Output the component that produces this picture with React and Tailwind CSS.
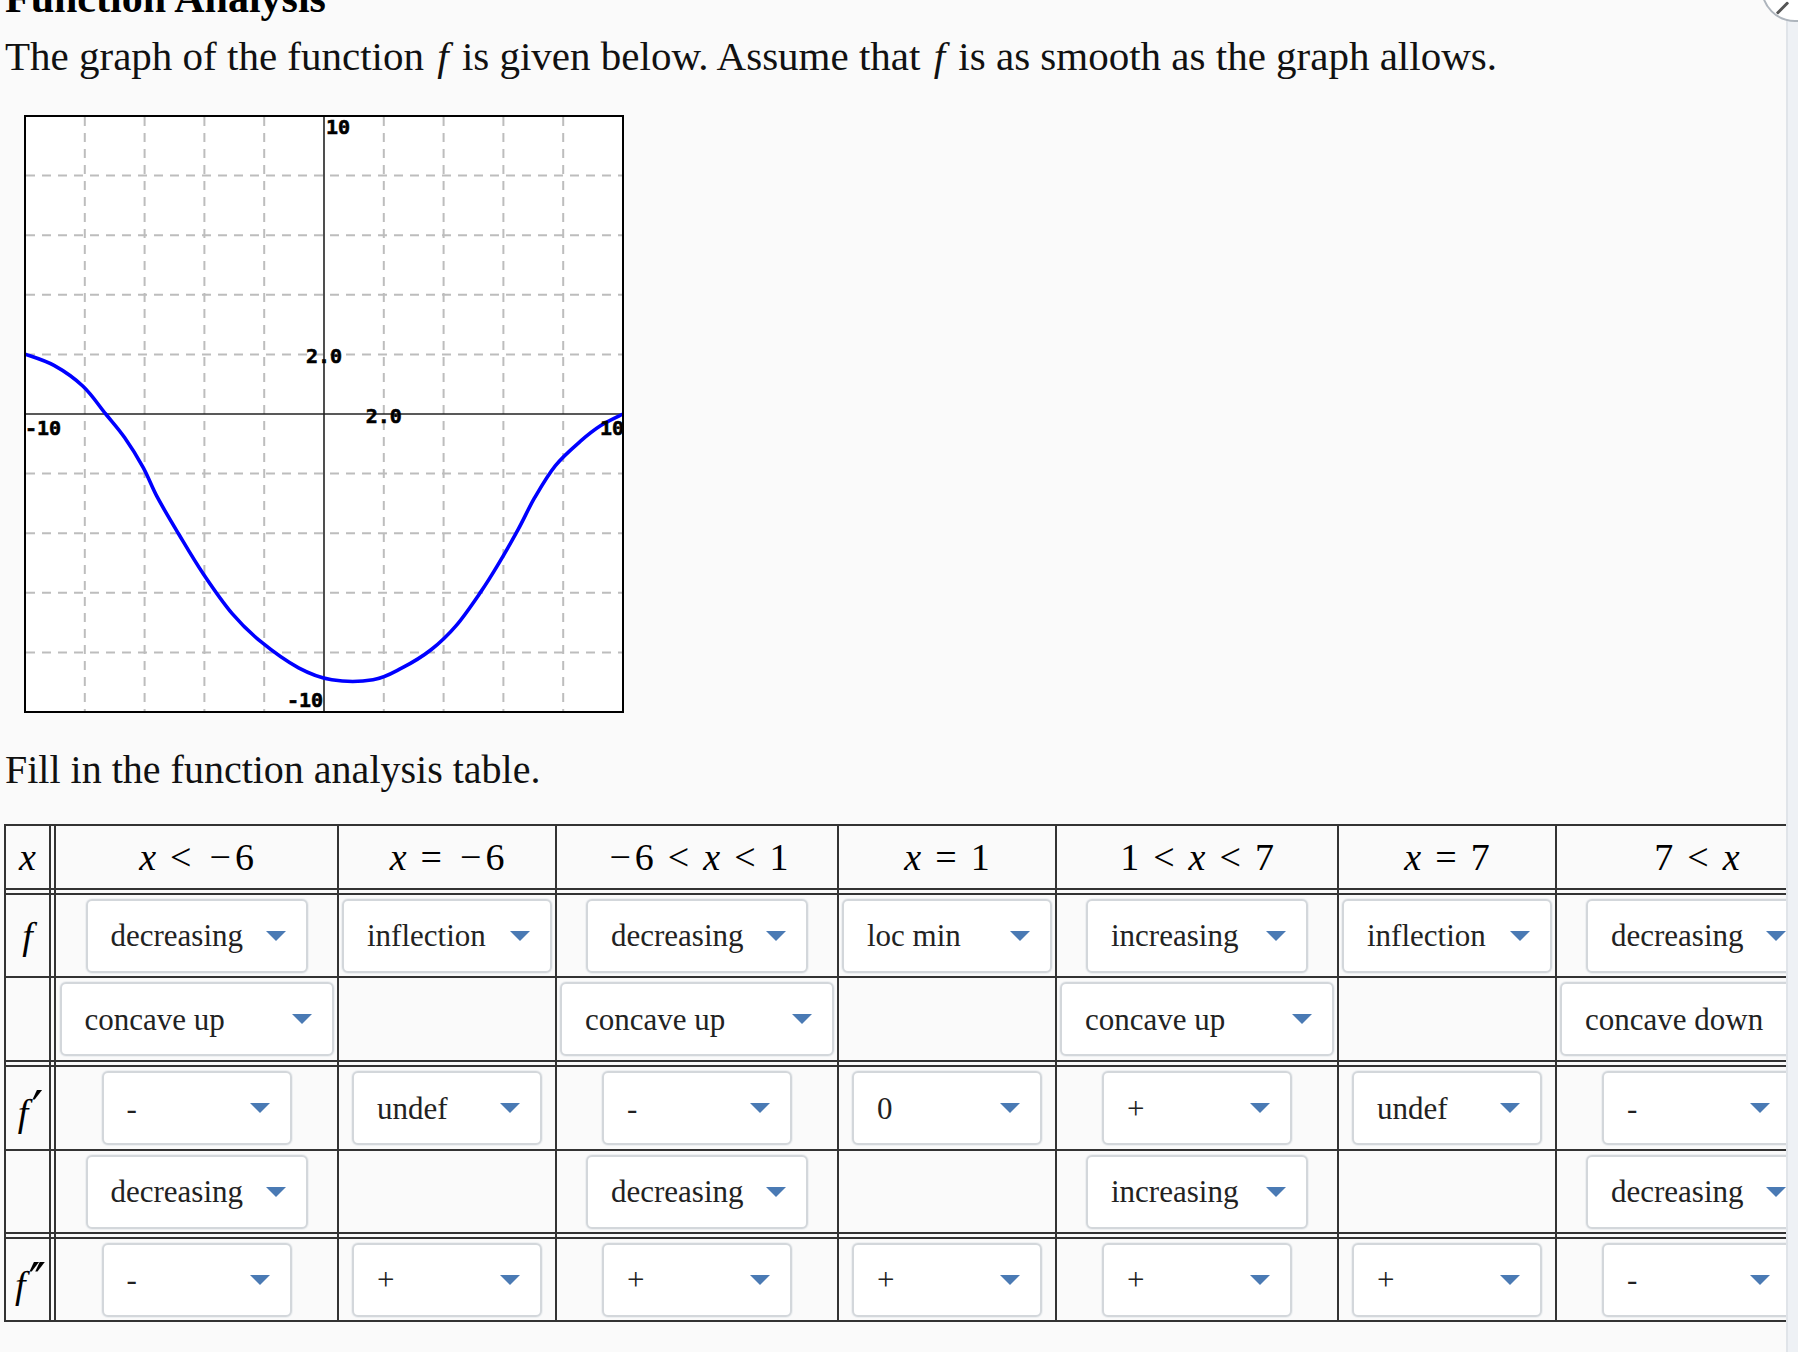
import React from "react";

const SERIF = "font-['Liberation_Serif',serif]";

function X(x) {
  return 1 + ((x + 10) / 20) * 598;
}
function Y(y) {
  return 1 + ((10 - y) / 20) * 596;
}

const curvePts = [
  [-10, 2.01], [-9.03, 1.63], [-8.06, 0.93], [-7.3, 0], [-6.67, -0.79], [-6.05, -1.79],
  [-5.57, -2.8], [-4.87, -4.01], [-4.04, -5.36], [-3.07, -6.7], [-2.1, -7.65], [-0.85, -8.52],
  [0.26, -8.92], [1.64, -8.92], [2.61, -8.52], [3.58, -7.91], [4.42, -7.1], [5.25, -5.96],
  [5.8, -5.09], [6.49, -3.88], [7.05, -2.8], [7.74, -1.73], [8.57, -0.92], [9.27, -0.38], [10, 0],
];

function curvePath() {
  const p = curvePts.map(([x, y]) => [X(x), Y(y)]);
  let d = `M${p[0][0].toFixed(2)},${p[0][1].toFixed(2)}`;
  for (let i = 0; i < p.length - 1; i++) {
    const p0 = p[i - 1] || p[i];
    const p1 = p[i];
    const p2 = p[i + 1];
    const p3 = p[i + 2] || p2;
    const c1 = [p1[0] + (p2[0] - p0[0]) / 6, p1[1] + (p2[1] - p0[1]) / 6];
    const c2 = [p2[0] - (p3[0] - p1[0]) / 6, p2[1] - (p3[1] - p1[1]) / 6];
    d += ` C${c1[0].toFixed(2)},${c1[1].toFixed(2)} ${c2[0].toFixed(2)},${c2[1].toFixed(2)} ${p2[0].toFixed(2)},${p2[1].toFixed(2)}`;
  }
  return d;
}

function Graph() {
  const ticks = [-8, -6, -4, -2, 2, 4, 6, 8];
  const lbl = {
    fontFamily: "'DejaVu Sans Mono', monospace",
    fontWeight: 700,
    fontSize: 20,
    fill: "#000",
    stroke: "#000",
    strokeWidth: 0.6,
  };
  return (
    <svg width="600" height="598" viewBox="0 0 600 598" className="block ml-[20px] mt-[38px]">
      <rect x="1" y="1" width="598" height="596" fill="#ffffff" />
      {ticks.map((k) => (
        <line key={"v" + k} x1={X(k)} y1="2" x2={X(k)} y2="596" stroke="#bdbdbd" strokeWidth="2" strokeDasharray="9 7" />
      ))}
      {ticks.map((k) => (
        <line key={"h" + k} x1="2" y1={Y(k)} x2="598" y2={Y(k)} stroke="#bdbdbd" strokeWidth="2" strokeDasharray="9 7" />
      ))}
      <line x1={X(0)} y1="1" x2={X(0)} y2="597" stroke="#222" strokeWidth="1.6" />
      <line x1="1" y1={Y(0)} x2="599" y2={Y(0)} stroke="#222" strokeWidth="1.6" />
      <path d={curvePath()} fill="none" stroke="#0000ff" strokeWidth="3.6" strokeLinejoin="round" />
      <text x="302" y="19" style={lbl}>10</text>
      <text x={X(0)} y="248" textAnchor="middle" style={lbl}>2.0</text>
      <text x={X(2)} y="308" textAnchor="middle" style={lbl}>2.0</text>
      <text x="1" y="320" style={lbl}>-10</text>
      <text x="600" y="320" textAnchor="end" style={lbl}>10</text>
      <text x="299" y="592" textAnchor="end" style={lbl}>-10</text>
      <rect x="1" y="1" width="598" height="596" fill="none" stroke="#000" strokeWidth="2" />
    </svg>
  );
}

function Arrow() {
  return (
    <svg width="20" height="10" viewBox="0 0 20 10" className="shrink-0">
      <path d="M0 0 H20 L10 10 Z" fill="#4a7ab4" />
    </svg>
  );
}

function Select({ text, w }) {
  return (
    <div
      className={`${SERIF} shrink-0 h-[74px] flex items-center justify-between bg-white border-2 border-[#d3d7db] rounded-[6px] shadow-[0_0_0_1px_#eef0f2] pl-[23px] pr-[20px] text-[31px] leading-none text-[#222] whitespace-nowrap`}
      style={{ width: w }}
    >
      <span>{text}</span>
      <Arrow />
    </div>
  );
}

function I({ children }) {
  return <i className="italic">{children}</i>;
}
function Rel({ c }) {
  return <span className="mx-[14px]">{c}</span>;
}
function Minus() {
  return <span className="px-[4px]">−</span>;
}
function Prime({ n }) {
  return (
    <span className="font-['DejaVu_Sans',sans-serif] not-italic text-[52px] leading-none relative top-[2px] ml-[3px] tracking-[-6px]">
      {n === 2 ? "′′" : "′"}
    </span>
  );
}

function Math({ children }) {
  return (
    <span className={`${SERIF} text-[38px] leading-none text-black whitespace-nowrap`}>{children}</span>
  );
}

const headers = [
  <Math><I>x</I></Math>,
  null,
  <Math><I>x</I><Rel c="<" /><Minus />6</Math>,
  <Math><I>x</I><Rel c="=" /><Minus />6</Math>,
  <Math><Minus />6<Rel c="<" /><I>x</I><Rel c="<" />1</Math>,
  <Math><I>x</I><Rel c="=" />1</Math>,
  <Math>1<Rel c="<" /><I>x</I><Rel c="<" />7</Math>,
  <Math><I>x</I><Rel c="=" />7</Math>,
  <Math>7<Rel c="<" /><I>x</I></Math>,
];

const S = (t, w) => <Select text={t} w={w} />;

const rows = [
  { kind: "row", cells: headers },
  { kind: "sp" },
  {
    kind: "row",
    cells: [
      <Math><I>f</I></Math>,
      null,
      S("decreasing", 222),
      S("inflection", 210),
      S("decreasing", 222),
      S("loc min", 210),
      S("increasing", 222),
      S("inflection", 210),
      S("decreasing", 222),
    ],
  },
  {
    kind: "row",
    cells: [
      null,
      null,
      S("concave up", 274),
      null,
      S("concave up", 274),
      null,
      S("concave up", 274),
      null,
      S("concave down", 274),
    ],
  },
  { kind: "sp" },
  {
    kind: "row",
    cells: [
      <Math><I>f</I><Prime n={1} /></Math>,
      null,
      S("-", 190),
      S("undef", 190),
      S("-", 190),
      S("0", 190),
      S("+", 190),
      S("undef", 190),
      S("-", 190),
    ],
  },
  {
    kind: "row",
    cells: [
      null,
      null,
      S("decreasing", 222),
      null,
      S("decreasing", 222),
      null,
      S("increasing", 222),
      null,
      S("decreasing", 222),
    ],
  },
  { kind: "sp" },
  {
    kind: "row",
    cells: [
      <Math><I>f</I><Prime n={2} /></Math>,
      null,
      S("-", 190),
      S("+", 190),
      S("+", 190),
      S("+", 190),
      S("+", 190),
      S("+", 190),
      S("-", 190),
    ],
  },
];

function Table() {
  const cells = [];
  rows.forEach((r, ri) => {
    for (let ci = 0; ci < 9; ci++) {
      const content = r.kind === "row" ? r.cells[ci] : null;
      cells.push(
        <div
          key={ri + "-" + ci}
          className="bg-[#fafafa] flex items-center justify-center overflow-visible min-w-0"
        >
          {content}
        </div>
      );
    }
  });
  return (
    <div className="mt-[34px] w-max grid grid-cols-[43px_3px_281px_216px_280px_216px_280px_216px_280px] grid-rows-[62px_3px_81px_82px_3px_82px_81px_3px_81px] gap-[2px] p-[2px] bg-[#333333]">
      {cells}
    </div>
  );
}

export default function App() {
  return (
    <div className="relative w-[1798px] h-[1352px] overflow-hidden bg-[#fafafa] flex">
      <div className={`${SERIF} w-[1786px] h-full overflow-hidden pl-[4px] text-[#111]`}>
        <div className="mt-[-23px] pl-[1px] text-[42px] leading-[42px] font-bold text-black whitespace-nowrap">
          Function Analysis
        </div>
        <div className="mt-[17px] pl-[1px] text-[41px] leading-[41px] whitespace-nowrap">
          The graph of the function <I><span className="mx-[3px]">f</span></I> is given below. Assume that{" "}
          <I><span className="mx-[3px]">f</span></I> is as smooth as the graph allows.
        </div>
        <Graph />
        <div className="mt-[37px] pl-[1px] text-[40px] leading-[40px] whitespace-nowrap">
          Fill in the function analysis table.
        </div>
        <Table />
      </div>
      <div className="w-[12px] h-full bg-[#eef1f5] border-l-2 border-[#e0e4e9]" />
      <div className="absolute left-[1761px] top-[-46px] w-[68px] h-[68px] rounded-full bg-white border-2 border-[#aeb5bd]">
        <div className="absolute left-[18px] top-[44px] w-[3px] h-[16px] bg-[#555] rotate-45 rounded-[1px]" />
      </div>
    </div>
  );
}
